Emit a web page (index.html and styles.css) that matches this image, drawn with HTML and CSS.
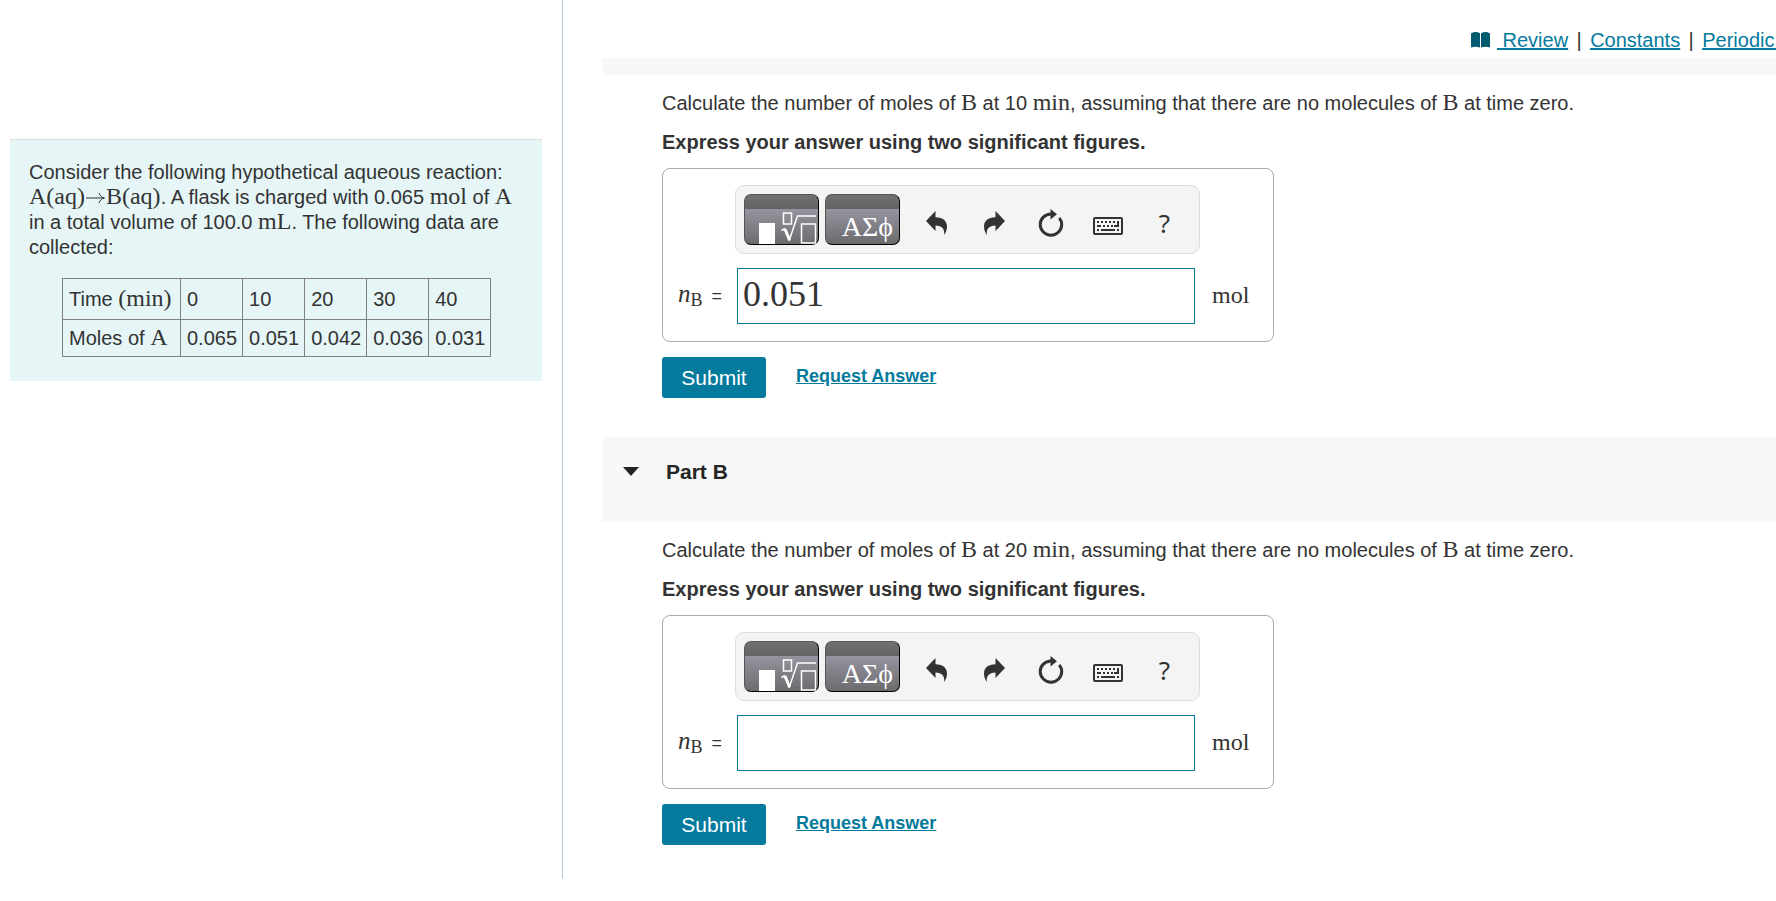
FILE: index.html
```html
<!DOCTYPE html>
<html lang="en">
<head>
<meta charset="utf-8">
<title>Part B</title>
<link rel="stylesheet" href="styles.css">
</head>
<body>
<svg class="sprite" aria-hidden="true">
  <symbol id="undo" viewBox="0 0 22 25"><path d="M0 10 9.500 0v6.200C17 6.200 21 10 21 15.500c0 3.500-1.300 6.500-2.800 8.500.6-6-2.200-9.500-8.700-9.500V20Z"/></symbol>
  <symbol id="redo" viewBox="0 0 22 25"><path d="M22 10 12.500 0v6.200C5 6.200 1 10 1 15.500c0 3.500 1.300 6.500 2.800 8.500-.6-6 2.200-9.500 8.700-9.500V20Z"/></symbol>
  <symbol id="reset" viewBox="0 0 26 28"><path d="M13 5C7 5 2.200 9.800 2.200 15.500S7 26.200 13 26.200s10.700-4.900 10.700-10.700c0-2.600-.9-4.800-2.500-6.600" fill="none" stroke="currentColor" stroke-width="3"/><path d="M12.500 0l6.500 5.200-6.500 5.300Z"/></symbol>
  <symbol id="keyboard" viewBox="0 0 30 18"><rect x="1" y="1" width="28" height="16" rx="1" fill="none" stroke="currentColor" stroke-width="2"/><path d="M4 4h2v2H4zm4 0h2v2H8zm4 0h2v2h-2zm4 0h2v2h-2zm4 0h2v2h-2zM4 8h4v2H4zm6 0h2v2h-2zm4 0h2v2h-2zm4 0h2v2h-2zm3 0h3V4h2v6h-5zM4 12h2v2H4zm4 0h14v2H8zm16 0h2v2h-2z"/></symbol>
  <symbol id="template" viewBox="0 0 73 49"><path fill="#fff" d="M14 28h16v21H14z"/><g fill="none" stroke="#fff"><path stroke-width="1.500" d="M38.500 18h8v11h-8z"/><path stroke-width="1.500" d="M56.500 29h14v19h-14z"/><path stroke-width="1.500" d="M44 46 52.500 21H71"/><path stroke-width="3" d="m40 34 4.500 11"/><path stroke-width="1.500" d="m36.500 35.500 3.500-2"/></g></symbol>
</svg>
<div class="page">
  <aside class="side">
    <section class="intro">
      <p>Consider the following hypothetical aqueous reaction: <span class="math">A(aq)</span><svg class="arrow" viewBox="0 0 21 14" role="img" aria-label="yields"><path d="M1 7h18M14 2c1 3 3 4.500 5.500 5C17 7.500 15 9 14 12"/></svg><span class="math">B(aq)</span>. A flask is charged with 0.065 <span class="math">mol</span> of <span class="math">A</span> in a total volume of 100.0 <span class="math">mL</span>. The following data are collected:</p>
      <table class="data">
        <tr><th scope="row">Time <span class="math">(min)</span></th><td>0</td><td>10</td><td>20</td><td>30</td><td>40</td></tr>
        <tr><th scope="row">Moles of <span class="math">A</span></th><td>0.065</td><td>0.051</td><td>0.042</td><td>0.036</td><td>0.031</td></tr>
      </table>
    </section>
  </aside>
  <main class="main">
    <nav class="links">
      <svg class="book" viewBox="0 0 19 17" aria-hidden="true"><path d="M0 1.500C3-.3 6-.3 9 1.300v14.200c-3-1-6-1-9 0ZM10 1.300c3-1.600 6-1.600 9 .2v14c-3-1-6-1-9 0Z"/></svg>
      <a href="#review">&nbsp;Review</a><span class="bar">|</span><a href="#constants">Constants</a><span class="bar">|</span><a href="#periodic">Periodic&nbsp;</a>
    </nav>
    <div class="strip"></div>
    <section class="part">
      <p class="question">Calculate the number of moles of <span class="math">B</span> at 10 <span class="math">min</span>, assuming that there are no molecules of <span class="math">B</span> at time zero.</p>
      <p class="hint">Express your answer using two significant figures.</p>
      <div class="answer">
        <div class="toolbar">
          <button class="palette" aria-label="Templates"><svg><use href="#template"/></svg></button>
          <button class="palette greek">ΑΣϕ</button>
          <div class="tools">
            <button class="tool" aria-label="Undo"><svg width="22" height="25"><use href="#undo"/></svg></button>
            <button class="tool" aria-label="Redo"><svg width="22" height="25"><use href="#redo"/></svg></button>
            <button class="tool" aria-label="Reset"><svg width="26" height="28"><use href="#reset"/></svg></button>
            <button class="tool low" aria-label="Keyboard shortcuts"><svg width="30" height="18"><use href="#keyboard"/></svg></button>
            <button class="tool help">?</button>
          </div>
        </div>
        <label class="name" for="moles-a"><span class="var">n</span><sub>B</sub> =</label>
        <input class="field" id="moles-a" type="text" value="0.051">
        <span class="unit">mol</span>
      </div>
      <div class="actions"><button class="submit">Submit</button><a class="request" href="#answer-a">Request Answer</a></div>
    </section>
    <header class="part-head"><button class="toggle" aria-label="Collapse Part B"><svg viewBox="0 0 16 9"><path d="M0 0h16L8 9Z"/></svg></button><h2>Part B</h2></header>
    <section class="part">
      <p class="question">Calculate the number of moles of <span class="math">B</span> at 20 <span class="math">min</span>, assuming that there are no molecules of <span class="math">B</span> at time zero.</p>
      <p class="hint">Express your answer using two significant figures.</p>
      <div class="answer">
        <div class="toolbar">
          <button class="palette" aria-label="Templates"><svg><use href="#template"/></svg></button>
          <button class="palette greek">ΑΣϕ</button>
          <div class="tools">
            <button class="tool" aria-label="Undo"><svg width="22" height="25"><use href="#undo"/></svg></button>
            <button class="tool" aria-label="Redo"><svg width="22" height="25"><use href="#redo"/></svg></button>
            <button class="tool" aria-label="Reset"><svg width="26" height="28"><use href="#reset"/></svg></button>
            <button class="tool low" aria-label="Keyboard shortcuts"><svg width="30" height="18"><use href="#keyboard"/></svg></button>
            <button class="tool help">?</button>
          </div>
        </div>
        <label class="name" for="moles-b"><span class="var">n</span><sub>B</sub> =</label>
        <input class="field" id="moles-b" type="text">
        <span class="unit">mol</span>
      </div>
      <div class="actions"><button class="submit">Submit</button><a class="request" href="#answer-b">Request Answer</a></div>
    </section>
  </main>
</div>
</body>
</html>
```
FILE: styles.css
```css
* { box-sizing: border-box; }
body {
  margin: 0;
  background: #fff;
  color: #333;
  font: 20px/25px "Liberation Sans", Arial, sans-serif;
  overflow-x: hidden;
}
p, h2 { margin: 0; }
button { font: inherit; cursor: pointer; }
a { color: #047a9c; }
.sprite { display: none; }
.math {
  font-family: "Liberation Serif", "Times New Roman", serif;
  font-size: 24px;
  line-height: 20px;
}
.page { display: flex; }
.side {
  flex: none;
  width: 563px;
  padding: 139px 20px 0 10px;
  border-right: 1px solid #b4c7d8;
}
.intro {
  padding: 20px 19px 24px;
  border-top: 1px solid #dcdcdc;
  background: #e6f6f7;
}
.arrow {
  width: 21px;
  height: 14px;
  fill: none;
  stroke: #333;
  vertical-align: -1px;
}
.data {
  margin: 18px 0 0 33px;
  border-collapse: collapse;
}
.data th, .data td {
  height: 37px;
  padding: 0 5px 0 6px;
  border: 1px solid #808080;
  font-weight: normal;
  text-align: left;
  white-space: nowrap;
}
.data th { width: 118px; }
.data tr:first-child > * { height: 41px; }

.main {
  flex: 1;
  min-width: 0;
  padding-left: 39px;
}
.links {
  display: flex;
  align-items: center;
  justify-content: flex-end;
  height: 58px;
  margin-right: -4px;
  padding-top: 22px;
  white-space: nowrap;
}
.book {
  width: 19px;
  height: 17px;
  margin-right: 7px;
  fill: #005a70;
}
.bar {
  width: 22px;
  text-align: center;
}
.strip {
  height: 17px;
  background: #f8f8f8;
}
.part { padding: 16px 0 39px 60px; }
.part:last-child { padding-bottom: 34px; }
.hint {
  margin-top: 14px;
  font-weight: bold;
}
.answer {
  display: grid;
  grid-template-columns: 59px 458px auto;
  align-items: center;
  row-gap: 14px;
  width: 612px;
  margin-top: 13px;
  padding: 16px 15px 17px;
  border: 1px solid #aaa;
  border-radius: 8px;
}
.toolbar {
  display: flex;
  grid-column: 2 / 4;
  align-items: center;
  gap: 6px;
  width: 465px;
  height: 69px;
  margin-left: -2px;
  padding: 0 6px 0 8px;
  border: 1px solid #ddd;
  border-radius: 9px;
  background: #f4f4f4;
}
.palette {
  display: flex;
  width: 75px;
  height: 51px;
  padding: 0;
  border: 1px solid #000;
  border-top-color: #555;
  border-left-color: #555;
  border-radius: 7px;
  background: linear-gradient(#717172, #636363 14px, #96949f 14px, #6b6b6e);
  color: #fff;
}
.palette svg { width: 73px; height: 49px; }
.greek {
  align-items: flex-end;
  justify-content: flex-end;
  padding: 0 6px 3px 0;
  font: 28px/28px "Liberation Serif", "Times New Roman", serif;
}
.tools {
  display: flex;
  flex: 1;
  align-items: center;
  padding: 7px 0 0 2px;
}
.tool {
  display: flex;
  flex: 1;
  justify-content: center;
  padding: 0;
  border: 0;
  background: none;
  color: #333;
  fill: currentColor;
}
.low { padding-top: 6px; }
.help { font: 26px/26px "Noto Sans", sans-serif; }
.name {
  padding-bottom: 2px;
  font-size: 18px;
  white-space: nowrap;
}
.var {
  font: italic 25px/25px "Liberation Serif", "Times New Roman", serif;
}
.name sub {
  margin-right: 4px;
  font: 18px/18px "Liberation Serif", "Times New Roman", serif;
}
.field {
  width: 100%;
  height: 56px;
  padding: 0 5px 4px;
  border: 1px solid #047a9c;
  border-radius: 0;
  background: #fff;
  color: #333;
  font: 36px/40px "Liberation Serif", "Times New Roman", serif;
}
.unit {
  padding: 0 0 2px 17px;
  font: 24px/25px "Liberation Serif", "Times New Roman", serif;
}
.actions {
  display: flex;
  align-items: center;
  gap: 30px;
  margin-top: 15px;
}
.submit {
  width: 104px;
  height: 41px;
  padding: 0;
  border: 0;
  border-radius: 3px;
  background: #047a9c;
  color: #fff;
  font-size: 21px;
}
.request {
  padding-bottom: 3px;
  font-size: 18px;
  font-weight: bold;
}
.part-head {
  display: flex;
  align-items: center;
  gap: 27px;
  height: 85px;
  padding: 0 0 16px 21px;
  background: #f8f8f8;
  color: #252525;
}
.part-head h2 { font-size: 21px; }
.toggle {
  display: flex;
  padding: 0;
  border: 0;
  background: none;
}
.toggle svg { width: 16px; height: 9px; fill: #252525; }
```
